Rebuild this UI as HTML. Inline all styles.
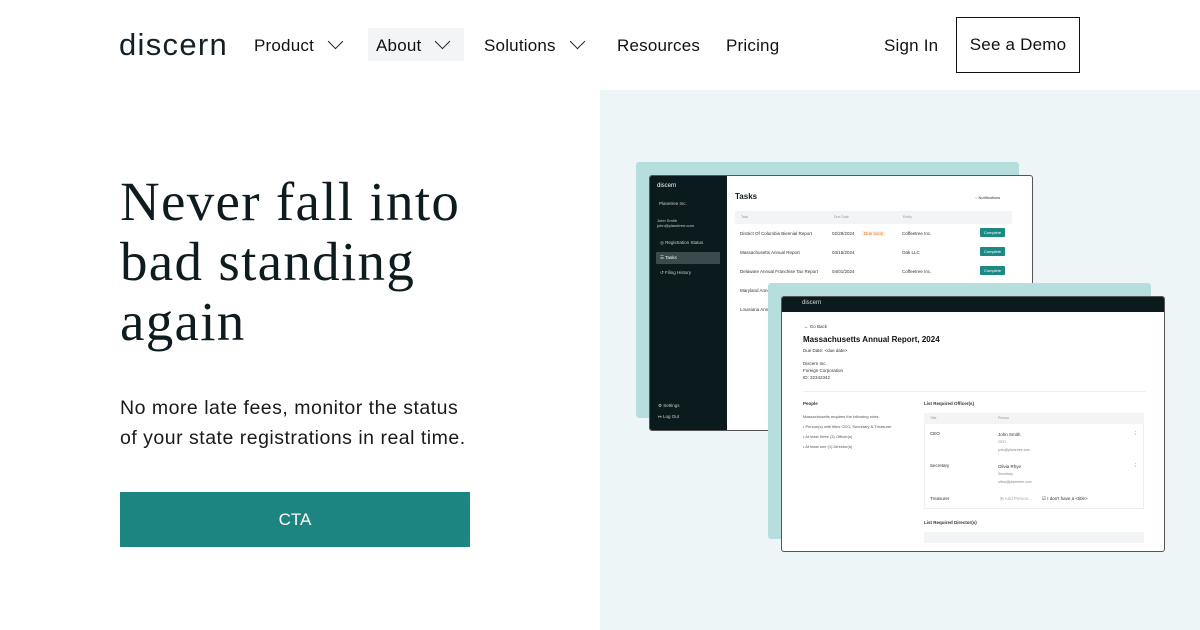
<!DOCTYPE html>
<html><head><meta charset="utf-8"><style>
*{margin:0;padding:0;box-sizing:border-box}
body{width:1200px;height:630px;overflow:hidden;background:#fff;font-family:"Liberation Sans",sans-serif;color:#0f1c1f;position:relative}
.a{position:absolute}
.nav{font-size:17px;color:#111;letter-spacing:0.2px}
.chev{display:inline-block;width:11px;height:11px;border-right:1.6px solid #222;border-bottom:1.6px solid #222;transform:rotate(45deg);margin-left:16px;position:relative;top:-4px}
.t{font-size:4.5px;color:#333;white-space:nowrap}
.btn{background:#1c8a84;color:#fff;font-size:4px;padding:2px 4px;border-radius:1px}
</style></head><body>
<div class="a" style="left:119px;top:27px;font-size:31px;letter-spacing:1.3px;color:#13202a">discern</div>
<div class="a nav" style="left:254px;top:36px">Product<span class="chev"></span></div>
<div class="a" style="left:368px;top:28px;width:96px;height:33px;background:#f3f4f6;border-radius:2px"></div>
<div class="a nav" style="left:376px;top:36px">About<span class="chev"></span></div>
<div class="a nav" style="left:484px;top:36px">Solutions<span class="chev"></span></div>
<div class="a nav" style="left:617px;top:36px">Resources</div>
<div class="a nav" style="left:726px;top:36px">Pricing</div>
<div class="a nav" style="left:884px;top:36px">Sign In</div>
<div class="a nav" style="left:956px;top:17px;width:124px;height:56px;border:1px solid #111;display:flex;align-items:center;justify-content:center">See a Demo</div>

<div class="a" style="left:600px;top:90px;width:600px;height:540px;background:#eef5f6"></div>

<div class="a" style="left:120px;top:172px;font-family:'Liberation Serif',serif;font-size:55px;line-height:60px;color:#0f1c1f;letter-spacing:1.3px">Never fall into<br>bad standing<br>again</div>
<div class="a" style="left:120px;top:393px;font-size:19.5px;line-height:30px;color:#1a1a1a;letter-spacing:0.5px">No more late fees, monitor the status<br>of your state registrations in real time.</div>
<div class="a" style="left:120px;top:492px;width:350px;height:55px;background:#1c8582;color:#fff;font-size:17px;display:flex;align-items:center;justify-content:center">CTA</div>

<!-- mockup 1 -->
<div class="a" style="left:636px;top:162px;width:383px;height:256px;background:#b5dedd;border-radius:3px"></div>
<div class="a" style="left:649px;top:175px;width:384px;height:256px;background:#fff;border:1px solid #555;border-radius:3px;overflow:hidden">
 <div class="a" style="left:0;top:0;width:77px;height:256px;background:#0b1a1d">
  <div class="a" style="left:7px;top:7px;color:#fff;font-size:6px">discern</div>
  <div class="a t" style="left:9px;top:25px;color:#ccc">Planetree Inc.</div>
  <div class="a t" style="left:7px;top:42px;color:#ccc;font-size:4px;line-height:5px">John Smith<br>john@planetree.com</div>
  <div class="a t" style="left:10px;top:64px;color:#ccc">◎ Registration Status</div>
  <div class="a" style="left:6px;top:76px;width:64px;height:12px;background:#3a4a4d;border-radius:1px"></div>
  <div class="a t" style="left:10px;top:79px;color:#fff">☰ Tasks</div>
  <div class="a t" style="left:10px;top:94px;color:#ccc">↺ Filing History</div>
  <div class="a t" style="left:8px;top:227px;color:#ccc">⚙ Settings</div>
  <div class="a t" style="left:8px;top:238px;color:#ccc">↦ Log Out</div>
 </div>
 <div class="a" style="left:85px;top:16px;font-size:8px;font-weight:bold">Tasks</div>
 <div class="a t" style="left:325px;top:19px;font-size:4px">◌ Notifications</div>
 <div class="a" style="left:85px;top:35px;width:277px;height:13px;background:#f3f4f5"></div>
 <div class="a t" style="left:91px;top:39px;color:#999;font-size:3.5px">Task</div>
 <div class="a t" style="left:184px;top:39px;color:#999;font-size:3.5px">Due Date</div>
 <div class="a t" style="left:253px;top:39px;color:#999;font-size:3.5px">Entity</div>
 <div class="a t" style="left:90px;top:55px">District Of Columbia Biennial Report</div><div class="a t" style="left:182px;top:55px">02/29/2024</div><div class="a t" style="left:212px;top:55px;color:#e07b2a;background:#fdf1e4;padding:0 2px">Due soon</div><div class="a t" style="left:252px;top:55px">Coffeetree Inc.</div><div class="a btn" style="left:330px;top:52px">Complete</div>
 <div class="a t" style="left:90px;top:74px">Massachusetts Annual Report</div><div class="a t" style="left:182px;top:74px">03/15/2024</div><div class="a t" style="left:252px;top:74px">Oak LLC</div><div class="a btn" style="left:330px;top:71px">Complete</div>
 <div class="a t" style="left:90px;top:93px">Delaware Annual Franchise Tax Report</div><div class="a t" style="left:182px;top:93px">04/01/2024</div><div class="a t" style="left:252px;top:93px">Coffeetree Inc.</div><div class="a btn" style="left:330px;top:90px">Complete</div>
 <div class="a t" style="left:90px;top:112px">Maryland Annual</div>
 <div class="a t" style="left:90px;top:131px">Louisiana Annual</div>
</div>

<!-- mockup 2 -->
<div class="a" style="left:768px;top:283px;width:383px;height:256px;background:#b5dedd;border-radius:3px"></div>
<div class="a" style="left:781px;top:296px;width:384px;height:256px;background:#fff;border:1px solid #555;border-radius:3px;overflow:hidden">
 <div class="a" style="left:0;top:0;width:384px;height:15px;background:#0b1a1d"></div>
 <div class="a" style="left:20px;top:3px;color:#ddd;font-size:6px">discern</div>
 <div class="a t" style="left:22px;top:27px">← Go Back</div>
 <div class="a" style="left:21px;top:38px;font-size:8px;font-weight:bold;color:#111">Massachusetts Annual Report, 2024</div>
 <div class="a t" style="left:21px;top:51px">Due Date: &lt;due date&gt;</div>
 <div class="a t" style="left:21px;top:63px;line-height:7px">Discern Inc.<br>Foreign Corporation<br>ID: 32342342</div>
 <div class="a" style="left:21px;top:94px;width:343px;height:1px;background:#eee"></div>
 <div class="a t" style="left:21px;top:104px;font-weight:bold">People</div>
 <div class="a t" style="left:21px;top:115px;font-size:4px;line-height:10px;color:#555">Massachusetts requires the following roles:<br>• Person(s) with titles CEO, Secretary &amp; Treasurer<br>• At least three (3) Officer(s)<br>• At least one (1) Director(s)</div>
 <div class="a t" style="left:142px;top:104px;font-weight:bold">List Required Officer(s)</div>
 <div class="a" style="left:142px;top:116px;width:220px;height:96px;border:1px solid #eee"></div>
 <div class="a" style="left:142px;top:116px;width:220px;height:11px;background:#f3f4f5"></div>
 <div class="a t" style="left:148px;top:119px;font-size:3.5px;color:#999">Title</div><div class="a t" style="left:216px;top:119px;font-size:3.5px;color:#999">Person</div>
 <div class="a t" style="left:148px;top:134px">CEO</div><div class="a t" style="left:216px;top:134px;line-height:7px">John Smith<br><span style="color:#888;font-size:3.5px">CEO<br>john@planetree.com</span></div><div class="a t" style="left:351px;top:134px">⋮</div>
 <div class="a t" style="left:148px;top:166px">Secretary</div><div class="a t" style="left:216px;top:166px;line-height:7px">Olivia Rhye<br><span style="color:#888;font-size:3.5px">Secretary<br>olivia@planetree.com</span></div><div class="a t" style="left:351px;top:166px">⋮</div>
 <div class="a t" style="left:148px;top:199px">Treasurer</div><div class="a t" style="left:218px;top:199px;color:#aaa">⊞ Add Person...</div><div class="a t" style="left:260px;top:199px">☑ I don't have a &lt;title&gt;</div>
 <div class="a t" style="left:142px;top:223px;font-weight:bold">List Required Director(s)</div>
 <div class="a" style="left:142px;top:235px;width:220px;height:11px;background:#f3f4f5"></div>
</div>
</body></html>
